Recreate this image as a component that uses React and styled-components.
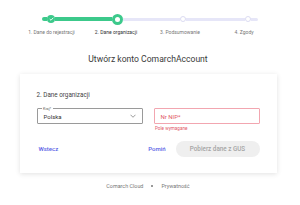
import React from "react";
import styled, { createGlobalStyle } from "styled-components";

const Global = createGlobalStyle`
  html, body { margin: 0; padding: 0; background: #ffffff; }
  body { font-family: Roboto, "Noto Sans", Arial, sans-serif; -webkit-font-smoothing: antialiased; }
`;

const Page = styled.div`
  width: 296px;
  display: flex;
  flex-direction: column;
  align-items: center;
`;

const Stepper = styled.div`
  width: 296px;
  padding-top: 13px;
  display: flex;
  flex-direction: column;
`;

const Track = styled.div`
  margin-left: 42px;
  height: 12px;
  display: flex;
  align-items: center;
`;

const Seg = styled.div`
  width: ${(p) => p.$w}px;
  height: ${(p) => (p.$done ? 4 : 3)}px;
  background: ${(p) => (p.$done ? "#3cc98b" : "#e6e6f8")};
  border-radius: ${(p) => (p.$cap === "l" ? "2px 0 0 2px" : p.$cap === "r" ? "0 2px 2px 0" : "0")};
`;

const Done = styled.div`
  width: 8px;
  height: 8px;
  border-radius: 50%;
  background: #3cc98b;
  display: flex;
  align-items: center;
  justify-content: center;
`;

const Active = styled.div`
  width: 11px;
  height: 11px;
  border-radius: 50%;
  background: #3cc98b;
  display: flex;
  align-items: center;
  justify-content: center;
  &::after {
    content: "";
    width: 5px;
    height: 5px;
    border-radius: 50%;
    background: #ffffff;
  }
`;

const Todo = styled.div`
  width: 4px;
  height: 4px;
  border-radius: 50%;
  background: #ffffff;
  border: 0.5px solid #dcdcf2;
`;

const Labels = styled.div`
  margin-top: 3px;
  margin-left: 19px;
  display: grid;
  grid-template-columns: 65px 64px 64px 64px;
`;

const StepLabel = styled.div`
  text-align: center;
  font-size: 5px;
  line-height: 8px;
  white-space: nowrap;
  color: ${(p) => (p.$active ? "#333" : "#777")};
`;

const Title = styled.h1`
  margin: 17px 0 0;
  font-size: 8.6px;
  line-height: 12px;
  font-weight: 400;
  color: #3a3a3a;
`;

const Card = styled.div`
  margin-top: 9px;
  width: 257px;
  box-sizing: border-box;
  padding: 17px 17px 16px;
  background: #fff;
  box-shadow: 0 1px 5px rgba(0, 0, 0, 0.12);
  display: flex;
  flex-direction: column;
`;

const Section = styled.div`
  font-size: 6.3px;
  line-height: 9px;
  color: #444;
`;

const Fields = styled.div`
  margin-top: 8px;
  display: grid;
  grid-template-columns: 1fr 1fr;
  column-gap: 11px;
`;

const Field = styled.div`
  display: flex;
  flex-direction: column;
`;

const Box = styled.div`
  position: relative;
  height: 16px;
  box-sizing: border-box;
  border: 1px solid ${(p) => (p.$error ? "#f2a6b0" : "#9a9a9a")};
  border-radius: 1px;
  display: flex;
  align-items: center;
  justify-content: space-between;
  padding: 0 6px 0 6px;
`;

const Legend = styled.span`
  position: absolute;
  top: -3px;
  left: 4px;
  padding: 0 1.5px;
  background: #fff;
  font-size: 3.8px;
  line-height: 5px;
  color: #666;
`;

const Value = styled.span`
  font-size: 6px;
  color: ${(p) => (p.$error ? "#e15767" : "#333")};
`;

const Hint = styled.span`
  margin: 1.5px 0 0 1.5px;
  font-size: 4.6px;
  line-height: 5px;
  color: #e15767;
`;

const Actions = styled.div`
  margin-top: 10px;
  display: flex;
  align-items: center;
`;

const Link = styled.span`
  font-size: 6px;
  font-weight: 500;
  color: #5a5fe6;
  padding-left: ${(p) => (p.$pad ? 2 : 0)}px;
`;

const Spacer = styled.div`
  flex: 1;
`;

const Pill = styled.div`
  margin-left: 10px;
  width: 84px;
  height: 16px;
  border-radius: 8px;
  background: #efefef;
  color: #a5a5a5;
  font-size: 6.3px;
  font-weight: 500;
  display: flex;
  align-items: center;
  justify-content: center;
`;

const Footer = styled.div`
  margin-top: 9px;
  display: flex;
  align-items: center;
  gap: 8px;
  font-size: 5.4px;
  line-height: 8px;
  color: #777;
`;

const Dot = styled.span`
  width: 2px;
  height: 2px;
  border-radius: 50%;
  background: #777;
`;

export default function App() {
  return (
    <>
      <Global />
      <Page>
        <Stepper>
          <Track>
            <Seg $w={5} $done $cap="l" />
            <Done>
              <svg width="5" height="4" viewBox="0 0 10 8">
                <path d="M1.5 4.2 L4 6.5 L8.5 1.5" fill="none" stroke="#fff" strokeWidth="1.8" />
              </svg>
            </Done>
            <Seg $w={57} $done />
            <Active />
            <Seg $w={57} />
            <Todo />
            <Seg $w={59} />
            <Todo />
            <Seg $w={7} $cap="r" />
          </Track>
          <Labels>
            <StepLabel>1. Dane do rejestracji</StepLabel>
            <StepLabel $active>2. Dane organizacji</StepLabel>
            <StepLabel>3. Podsumowanie</StepLabel>
            <StepLabel>4. Zgody</StepLabel>
          </Labels>
        </Stepper>
        <Title>Utwórz konto ComarchAccount</Title>
        <Card>
          <Section>2. Dane organizacji</Section>
          <Fields>
            <Field>
              <Box>
                <Legend>Kraj*</Legend>
                <Value>Polska</Value>
                <svg width="6" height="4" viewBox="0 0 12 8">
                  <path d="M1 1.5 L6 6.5 L11 1.5" fill="none" stroke="#666" strokeWidth="1.3" />
                </svg>
              </Box>
            </Field>
            <Field>
              <Box $error>
                <Value $error>Nr NIP*</Value>
              </Box>
              <Hint>Pole wymagane</Hint>
            </Field>
          </Fields>
          <Actions>
            <Link $pad>Wstecz</Link>
            <Spacer />
            <Link>Pomiń</Link>
            <Pill>Pobierz dane z GUS</Pill>
          </Actions>
        </Card>
        <Footer>
          <span>Comarch Cloud</span>
          <Dot />
          <span>Prywatność</span>
        </Footer>
      </Page>
    </>
  );
}
